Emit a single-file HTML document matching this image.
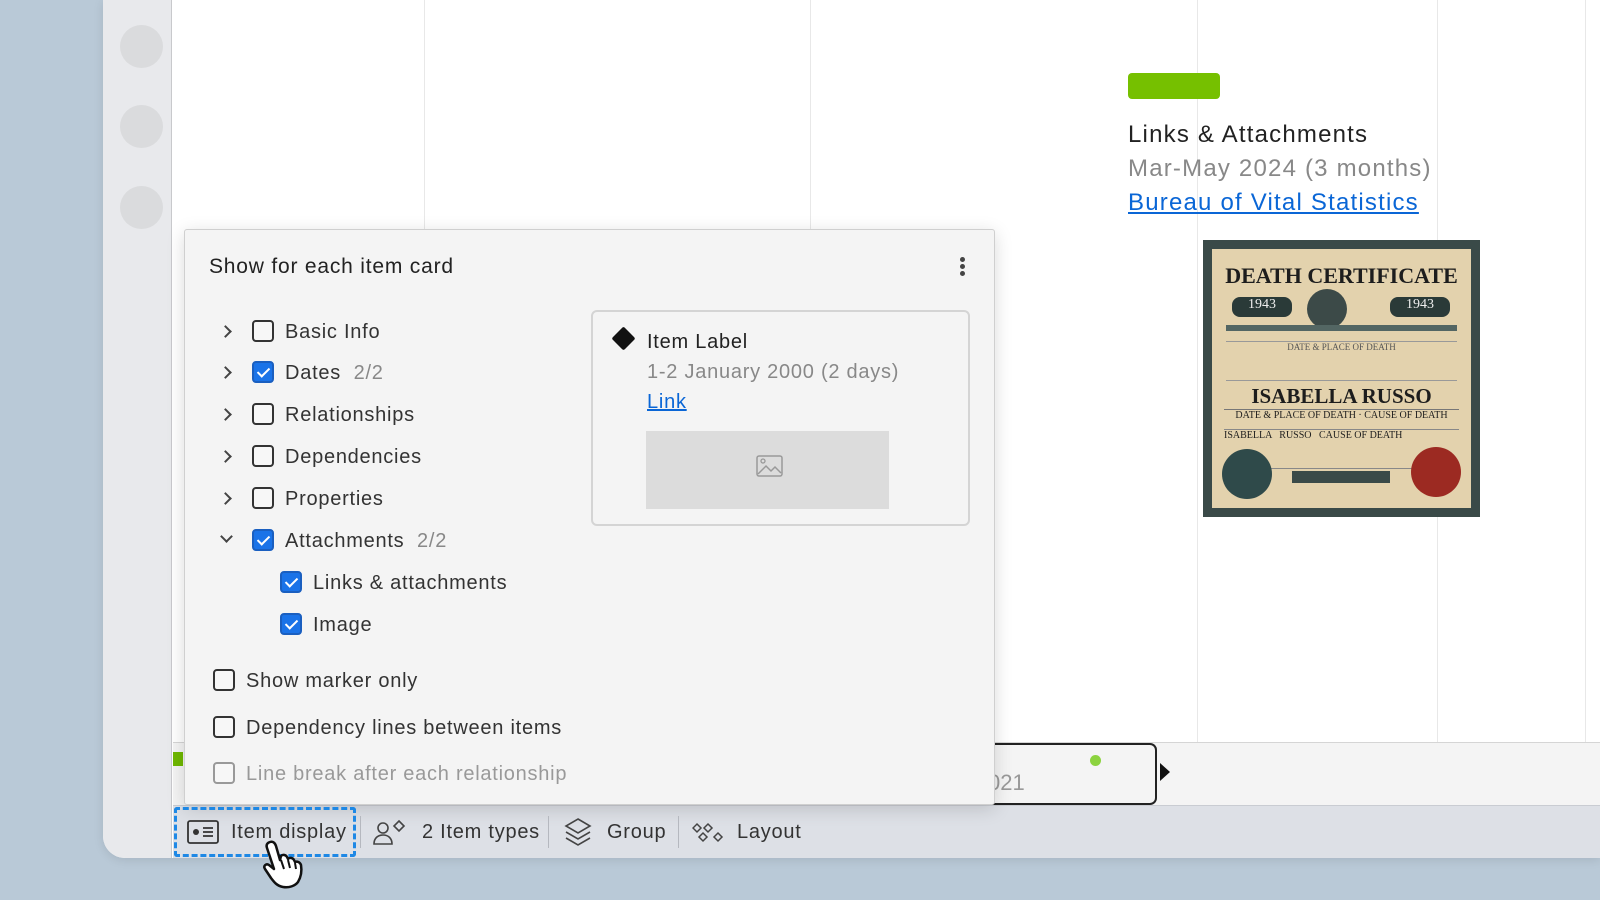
<!DOCTYPE html>
<html><head><meta charset="utf-8"><style>
*{margin:0;padding:0;box-sizing:border-box}
body{width:1600px;height:900px;background:#b9c9d7;position:relative;overflow:hidden;font-family:"Liberation Sans","DejaVu Sans",sans-serif}
.a{position:absolute}
.win{left:103px;top:0;width:1497px;height:858px;background:#fff;border-bottom-left-radius:22px;overflow:hidden;box-shadow:0 2px 10px rgba(0,0,0,.1)}
.vl{position:absolute;top:0;width:1px;height:742px;background:#e8e8e8}
.cb{position:absolute;width:22px;height:22px;border:2px solid #333;border-radius:4px;background:#f7f7f7}
.cb.on{background:#1a73e8;border-color:#1a5fc0}
.cb.on::after{content:"";position:absolute;left:6px;top:2px;width:5px;height:10px;border:solid #fff;border-width:0 2px 2px 0;transform:rotate(45deg)}
.t{position:absolute;font-size:20px;color:#333;white-space:nowrap;line-height:24px;letter-spacing:0.75px}
.g{color:#888}
.chev{position:absolute;width:9px;height:9px;border:solid #444;border-width:2px 2px 0 0;transform:rotate(45deg)}
.tb{position:absolute;font-size:20px;color:#333;top:820px;line-height:24px;white-space:nowrap;letter-spacing:0.75px}
.sep{position:absolute;top:816px;width:1px;height:32px;background:#b5b8bf}
.rc{position:absolute;left:1128px;font-size:24px;white-space:nowrap;letter-spacing:1.2px}
</style></head><body>
<div class="a win">
  <div class="a" style="left:0;top:0;width:69px;height:858px;background:#e8e9ec;border-right:1px solid #c8c9cc"></div>
  <div class="a" style="left:17px;top:25px;width:43px;height:43px;border-radius:50%;background:#dadbdd"></div>
  <div class="a" style="left:17px;top:105px;width:43px;height:43px;border-radius:50%;background:#dadbdd"></div>
  <div class="a" style="left:17px;top:186px;width:43px;height:43px;border-radius:50%;background:#dadbdd"></div>
  <div class="vl" style="left:321px"></div><div class="vl" style="left:707px"></div><div class="vl" style="left:1094px"></div><div class="vl" style="left:1334px"></div><div class="vl" style="left:1482px"></div>
  <div class="a" style="left:70px;top:742px;width:1427px;height:63px;background:#f4f4f4;border-top:1px solid #d5d5d5"></div>
  <div class="a" style="left:70px;top:752px;width:10px;height:14px;background:#6fb800"></div>
  <div class="a" style="left:70px;top:805px;width:1427px;height:53px;background:#dde0e6;border-top:1px solid #c9ccd2"></div>
</div>
<!-- right card -->
<div class="a" style="left:1128px;top:73px;width:92px;height:26px;background:#76c000;border-radius:4px"></div>
<div class="rc" style="top:121px;color:#222">Links &amp; Attachments</div>
<div class="rc" style="top:155px;color:#888">Mar-May 2024 (3 months)</div>
<div class="rc" style="top:189px;color:#0a66d6;text-decoration:underline">Bureau of Vital Statistics</div>
<div class="a" style="left:1203px;top:240px;width:277px;height:277px;background:#3a4a48;padding:9px">
 <div style="width:100%;height:100%;background:#e3d2ad;position:relative;font-family:'Liberation Serif',serif;color:#1d1d1d;text-align:center">
  <div style="position:absolute;top:14px;width:100%;font-size:22px;font-weight:bold">DEATH CERTIFICATE</div>
  <div style="position:absolute;top:40px;left:95px;width:40px;height:40px;border-radius:50%;background:#3c4a48"></div>
  <div style="position:absolute;top:48px;left:20px;width:60px;height:20px;background:#2a3a38;color:#eee;font-size:14px;border-radius:8px">1943</div>
  <div style="position:absolute;top:48px;left:178px;width:60px;height:20px;background:#2a3a38;color:#eee;font-size:14px;border-radius:8px">1943</div>
  <div style="position:absolute;top:76px;left:14px;right:14px;height:6px;background:#536663"></div>
  <div style="position:absolute;top:92px;left:14px;right:14px;height:40px;border-top:1px solid #999;border-bottom:1px solid #999;font-size:9px;color:#555">DATE &amp; PLACE OF DEATH</div>
  <div style="position:absolute;top:135px;width:100%;font-size:21px;font-weight:bold">ISABELLA RUSSO</div>
  <div style="position:absolute;top:160px;left:12px;right:12px;font-size:10px;border-top:1px solid #777">DATE &amp; PLACE OF DEATH · CAUSE OF DEATH</div>
  <div style="position:absolute;top:180px;left:12px;right:12px;height:40px;border-top:1px solid #888;border-bottom:1px solid #888;font-size:10px;text-align:left">ISABELLA &nbsp; RUSSO &nbsp; CAUSE OF DEATH</div>
  <div style="position:absolute;top:200px;left:10px;width:50px;height:50px;border-radius:50%;background:#2f4a4a"></div>
  <div style="position:absolute;top:198px;right:10px;width:50px;height:50px;border-radius:50%;background:#9c2a22"></div>
  <div style="position:absolute;top:222px;left:80px;width:98px;height:12px;background:#3a4a48"></div>
 </div>
</div>
<!-- timeline item -->
<div class="a" style="left:990px;top:743px;width:167px;height:62px;border:2px solid #222;border-left:none;border-radius:0 7px 7px 0;background:#f4f4f4"></div>
<div class="a" style="left:988px;top:770px;font-size:22px;color:#999">021</div>
<div class="a" style="left:1090px;top:755px;width:11px;height:11px;border-radius:50%;background:#8cd33f"></div>
<div class="a" style="left:1160px;top:763px;width:0;height:0;border-top:9px solid transparent;border-bottom:9px solid transparent;border-left:10px solid #111"></div>
<!-- popup -->
<div class="a" style="left:184px;top:229px;width:811px;height:576px;background:#f4f4f4;border:1px solid #cfcfcf;border-radius:3px;box-shadow:0 4px 18px rgba(0,0,0,.15)"></div>
<div class="a" style="left:209px;top:255px;font-size:21px;color:#222;letter-spacing:0.8px">Show for each item card</div>
<div class="a" style="left:960px;top:257px;width:5px;height:5px;border-radius:50%;background:#444;box-shadow:0 7px 0 #444,0 14px 0 #444"></div>

<div class="chev" style="left:221px;top:327px"></div><div class="cb" style="left:252px;top:320px"></div><div class="t" style="left:285px;top:320px">Basic Info</div>
<div class="chev" style="left:221px;top:368px"></div><div class="cb on" style="left:252px;top:361px"></div><div class="t" style="left:285px;top:361px">Dates &nbsp;<span class="g">2/2</span></div>
<div class="chev" style="left:221px;top:410px"></div><div class="cb" style="left:252px;top:403px"></div><div class="t" style="left:285px;top:403px">Relationships</div>
<div class="chev" style="left:221px;top:452px"></div><div class="cb" style="left:252px;top:445px"></div><div class="t" style="left:285px;top:445px">Dependencies</div>
<div class="chev" style="left:221px;top:494px"></div><div class="cb" style="left:252px;top:487px"></div><div class="t" style="left:285px;top:487px">Properties</div>
<div class="chev" style="left:222px;top:532px;transform:rotate(135deg)"></div><div class="cb on" style="left:252px;top:529px"></div><div class="t" style="left:285px;top:529px">Attachments &nbsp;<span class="g">2/2</span></div>
<div class="cb on" style="left:280px;top:571px"></div><div class="t" style="left:313px;top:571px">Links &amp; attachments</div>
<div class="cb on" style="left:280px;top:613px"></div><div class="t" style="left:313px;top:613px">Image</div>
<div class="cb" style="left:213px;top:669px"></div><div class="t" style="left:246px;top:669px">Show marker only</div>
<div class="cb" style="left:213px;top:716px"></div><div class="t" style="left:246px;top:716px">Dependency lines between items</div>
<div class="cb" style="left:213px;top:762px;border-color:#999"></div><div class="t" style="left:246px;top:762px;color:#999">Line break after each relationship</div>

<div class="a" style="left:591px;top:310px;width:379px;height:216px;border:2px solid #d4d4d4;border-radius:6px"></div>
<div class="a" style="left:615px;top:330px;width:17px;height:17px;background:#111;transform:rotate(45deg);border-radius:2px"></div>
<div class="t" style="left:647px;top:330px;color:#222">Item Label</div>
<div class="t" style="left:647px;top:360px;color:#888">1-2 January 2000 (2 days)</div>
<div class="t" style="left:647px;top:390px;color:#0a66d6;text-decoration:underline">Link</div>
<div class="a" style="left:646px;top:431px;width:243px;height:78px;background:#dcdcdc"></div>
<svg class="a" style="left:756px;top:455px" width="27" height="22" viewBox="0 0 27 22"><rect x="1" y="1" width="25" height="20" rx="2" fill="none" stroke="#999" stroke-width="1.5"/><circle cx="7" cy="6" r="2" fill="none" stroke="#999" stroke-width="1.3"/><path d="M2 19 L10 11 L15 16 L19 12 L25 18" fill="none" stroke="#999" stroke-width="1.5"/></svg>

<!-- toolbar -->
<div class="a" style="left:174px;top:807px;width:182px;height:50px;border:3px dashed #1e88e5;border-radius:3px"></div>
<svg class="a" style="left:187px;top:820px" width="32" height="24" viewBox="0 0 32 24"><rect x="1" y="1" width="30" height="22" rx="2" fill="none" stroke="#333" stroke-width="1.8"/><circle cx="9" cy="12" r="3" fill="#333"/><path d="M16 8h10M16 12h10M16 16h10" stroke="#333" stroke-width="1.8"/></svg>
<div class="tb" style="left:231px">Item display</div>
<div class="sep" style="left:360px"></div>
<svg class="a" style="left:372px;top:819px" width="34" height="26" viewBox="0 0 34 26"><circle cx="11" cy="9" r="5" fill="none" stroke="#444" stroke-width="1.6"/><path d="M2 25c0-6 4-9 9-9s9 3 9 9z" fill="none" stroke="#444" stroke-width="1.6"/><path d="M27 2l5 5-5 5-5-5z" fill="none" stroke="#444" stroke-width="1.6"/></svg>
<div class="tb" style="left:422px">2 Item types</div>
<div class="sep" style="left:548px"></div>
<svg class="a" style="left:564px;top:817px" width="28" height="30" viewBox="0 0 28 30"><path d="M14 2L26 9 14 16 2 9z" fill="none" stroke="#444" stroke-width="1.6"/><path d="M2 15l12 7 12-7M2 21l12 7 12-7" fill="none" stroke="#444" stroke-width="1.6"/></svg>
<div class="tb" style="left:607px">Group</div>
<div class="sep" style="left:678px"></div>
<svg class="a" style="left:692px;top:822px" width="32" height="22" viewBox="0 0 32 22"><path d="M5 2l4 4-4 4-4-4zM16 2l4 4-4 4-4-4zM11 11l4 4-4 4-4-4zM26 11l4 4-4 4-4-4z" fill="none" stroke="#444" stroke-width="1.5"/></svg>
<div class="tb" style="left:737px">Layout</div>
<!-- hand cursor -->
<svg class="a" style="left:256px;top:838px" width="54" height="52" viewBox="0 0 54 52"><path d="M14 4c3-1 5 1 6 4l4 14 1-4c2-2 5-1 6 1l1 2c2-2 5-1 6 1l1 2c2-1 5 0 6 3 1 6 0 12-3 17-3 4-9 6-15 5-6-1-9-5-12-9L9 31c-2-3 1-6 4-4l5 4L11 10c-1-3 0-5 3-6z" fill="#fff" stroke="#111" stroke-width="2.5" stroke-linejoin="round"/><path d="M25 22l3 9M32 22l2 8M39 25l1 6" stroke="#111" stroke-width="2"/></svg>
</body></html>
